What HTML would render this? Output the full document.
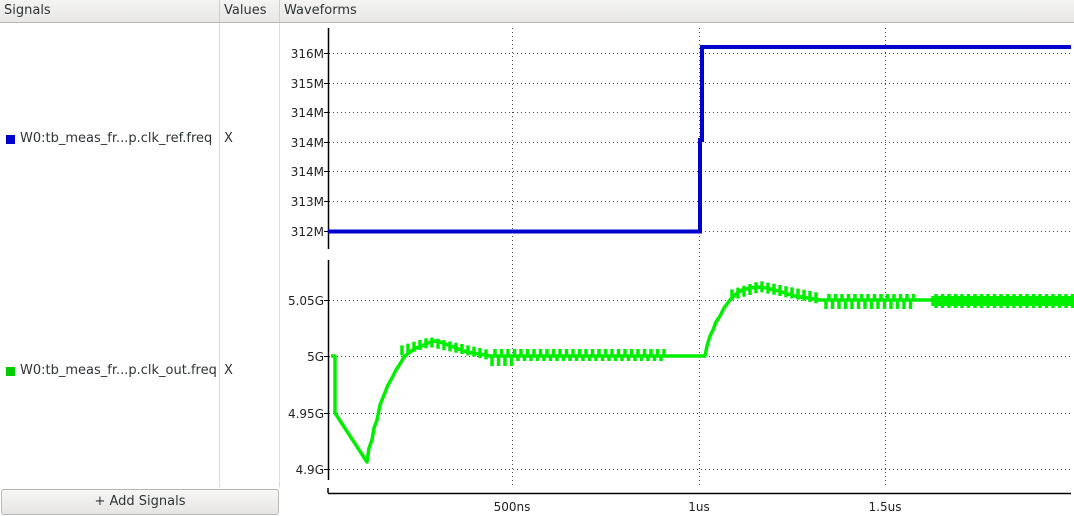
<!DOCTYPE html>
<html><head><meta charset="utf-8"><style>
body{margin:0;width:1074px;height:516px;overflow:hidden;background:#fff;font-family:"DejaVu Sans","Liberation Sans",sans-serif;}
.hdr{position:absolute;top:0;left:0;width:1074px;height:22px;background:linear-gradient(#f4f4f3,#e8e7e6);border-bottom:1px solid #b8b6b3;font-size:13px;color:#2e3436;}
.hdr span{position:absolute;top:3px}
.vl{position:absolute;top:23px;width:1px;height:464px;background:#dcdcdc}
.lbl{position:absolute;font-size:13px;color:#2e3436}
.sq{position:absolute;width:9px;height:9px}
.btn{position:absolute;left:1px;top:489px;width:276px;height:24px;border:1px solid #b9b6b2;border-radius:3px;background:linear-gradient(#f6f6f5,#e6e5e4);font-size:13px;color:#2e3436;text-align:center;line-height:24px}
</style></head><body>
<div class="hdr"><span style="left:4px">Signals</span><span style="left:224px">Values</span><span style="left:284px">Waveforms</span></div>
<div style="position:absolute;left:219px;top:0;width:1px;height:22px;background:#d0cfcd"></div>
<div style="position:absolute;left:279px;top:0;width:1px;height:22px;background:#d0cfcd"></div>
<div class="vl" style="left:219px"></div><div class="vl" style="left:279px"></div>
<div class="sq" style="left:6px;top:135px;background:#0000cc"></div>
<div class="lbl" style="left:20px;top:131px">W0:tb_meas_fr...p.clk_ref.freq</div>
<div class="lbl" style="left:224px;top:131px">X</div>
<div class="sq" style="left:6px;top:367px;background:#00cc00"></div>
<div class="lbl" style="left:20px;top:363px">W0:tb_meas_fr...p.clk_out.freq</div>
<div class="lbl" style="left:224px;top:363px">X</div>
<div class="btn">+ Add Signals</div>
<svg id="s" width="1074" height="516" style="position:absolute;left:0;top:0" font-family="DejaVu Sans, Liberation Sans, sans-serif" font-size="12" fill="#000">
<g stroke="#444" stroke-width="1" stroke-dasharray="1,3">
<line x1="329" y1="53.5" x2="1070" y2="53.5"/><line x1="329" y1="83.5" x2="1070" y2="83.5"/><line x1="329" y1="112.5" x2="1070" y2="112.5"/><line x1="329" y1="142.5" x2="1070" y2="142.5"/><line x1="329" y1="171.5" x2="1070" y2="171.5"/><line x1="329" y1="201.5" x2="1070" y2="201.5"/><line x1="329" y1="231.5" x2="1070" y2="231.5"/>
<line x1="329" y1="300.5" x2="1070" y2="300.5"/><line x1="329" y1="356.5" x2="1070" y2="356.5"/><line x1="329" y1="413.5" x2="1070" y2="413.5"/><line x1="329" y1="469.5" x2="1070" y2="469.5"/>
<line x1="512.5" y1="28" x2="512.5" y2="488"/><line x1="699.5" y1="28" x2="699.5" y2="488"/><line x1="885.5" y1="28" x2="885.5" y2="488"/>
</g>
<g stroke="#000" stroke-width="1.5">
<line x1="328.5" y1="28" x2="328.5" y2="249"/><line x1="328.5" y1="260" x2="328.5" y2="480"/>
<line x1="328" y1="488" x2="328" y2="493"/><line x1="328" y1="493.5" x2="1071" y2="493.5"/>
</g>
<g stroke="#000"><line x1="324" y1="53.5" x2="328" y2="53.5"/><line x1="324" y1="83.5" x2="328" y2="83.5"/><line x1="324" y1="112.5" x2="328" y2="112.5"/><line x1="324" y1="142.5" x2="328" y2="142.5"/><line x1="324" y1="171.5" x2="328" y2="171.5"/><line x1="324" y1="201.5" x2="328" y2="201.5"/><line x1="324" y1="231.5" x2="328" y2="231.5"/><line x1="324" y1="300.5" x2="328" y2="300.5"/><line x1="324" y1="356.5" x2="328" y2="356.5"/><line x1="324" y1="413.5" x2="328" y2="413.5"/><line x1="324" y1="469.5" x2="328" y2="469.5"/></g>
<g text-anchor="end" fill="#222">
<text x="324" y="58">316M</text><text x="324" y="88">315M</text><text x="324" y="117">314M</text><text x="324" y="147">314M</text><text x="324" y="176">314M</text><text x="324" y="206">313M</text><text x="324" y="236">312M</text>
<text x="324" y="305">5.05G</text><text x="324" y="361">5G</text><text x="324" y="418">4.95G</text><text x="324" y="474">4.9G</text>
</g>
<g text-anchor="middle" fill="#222"><text x="512" y="511">500ns</text><text x="699" y="511">1us</text><text x="885" y="511">1.5us</text></g>
<polyline points="328,231.5 700,231.5 700,140 702,140 702,47 1071,47" fill="none" stroke="#0000cc" stroke-width="4"/>
<path id="g" fill="none" stroke="#00ee00" stroke-width="3.5" stroke-linejoin="round"/>
</svg>
<script>
var d='M331,356 L335,356 L335,413 L367,462 L369,448 L372,440 L374,428 L377,420 L380,405 L384,395 L388,385 L392,378 L396,370 L400,364 L404,357 L410,352 L416,348 L422,346 L428,343 L434,341 L440,342 L448,345 L456,348 L464,351 L472,353 L480,354 L490,356 L705,356 L707,346 L710,336 L713,330 L716,322 L720,316 L724,308 L730,300 L736,294 L742,290 L750,288 L758,287 L766,288 L775,290 L785,293 L795,296 L808,298 L820,300 L1071,300';
function base1(x){if(x<430)return 343+(430-x)*0.3;return 343+(x-430)*0.22;}
for(var x=402;x<490;x+=6){var b=base1(x);d+=' M'+x+','+(b+4)+' L'+x+','+(b-6);}
for(var x=492;x<665;x+=6.5){var lo=(x<515)?366:361;d+=' M'+x.toFixed(1)+',356 L'+x.toFixed(1)+','+lo+' M'+(x+3).toFixed(1)+',356 L'+(x+3).toFixed(1)+',349';}
function base2(x){if(x<760)return 288+(760-x)*0.3;return 288+(x-760)*0.2;}
for(var x=732;x<820;x+=6){var b=base2(x);d+=' M'+x+','+(b+4)+' L'+x+','+(b-7);}
for(var x=826;x<915;x+=6.5){d+=' M'+x.toFixed(1)+',300 L'+x.toFixed(1)+',309 M'+(x+3).toFixed(1)+',300 L'+(x+3).toFixed(1)+',294';}
for(var x=933;x<1071;x+=6.5){d+=' M'+x.toFixed(1)+',306 L'+x.toFixed(1)+',296 M'+(x+3).toFixed(1)+',308 L'+(x+3).toFixed(1)+',294';}
document.getElementById('g').setAttribute('d',d);
</script>
</body></html>
